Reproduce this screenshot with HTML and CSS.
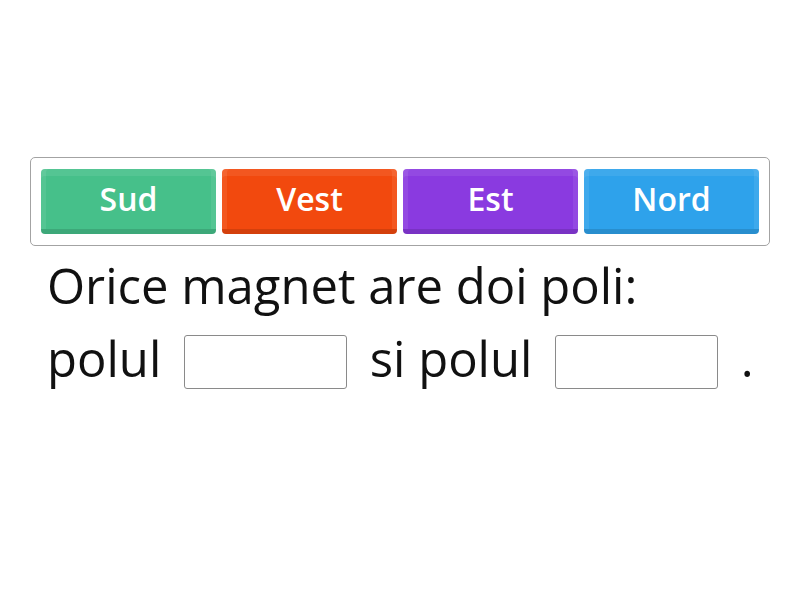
FILE: index.html
```html
<!DOCTYPE html>
<html>
<head>
<meta charset="utf-8">
<link rel="stylesheet" href="styles.css">
</head>
<body>
<div class="page">
  <div class="bank">
    <div class="tile green">Sud</div>
    <div class="tile red">Vest</div>
    <div class="tile purple">Est</div>
    <div class="tile blue">Nord</div>
  </div>
  <div class="sentence">
    <div class="line">Orice magnet are doi poli:</div>
    <div class="line">polul <span class="blank"></span> si polul <span class="blank"></span> .</div>
  </div>
</div>
</body>
</html>
```

FILE: styles.css
```css
html, body {
  margin: 0;
  padding: 0;
  background: #fff;
}
.page {
  width: 800px;
  height: 600px;
  padding-top: 157px;
  box-sizing: border-box;
  font-family: "Open Sans", sans-serif;
}
.bank {
  margin-left: 30px;
  width: 740px;
  box-sizing: border-box;
  border: 1px solid #a3a3a3;
  border-radius: 5px;
  padding: 11px 10px;
  display: flex;
  gap: 6px;
}
.tile {
  flex: 1;
  height: 65px;
  box-sizing: border-box;
  border-radius: 4px;
  color: #fff;
  font-weight: 600;
  font-size: 32px;
  line-height: 40px;
  display: flex;
  align-items: center;
  justify-content: center;
  border-bottom: 5px solid rgba(0,0,0,0.12);
  box-shadow: inset 0 7px 0 rgba(255,255,255,0.08), inset 5px 0 0 rgba(255,255,255,0.08), inset -5px 0 0 rgba(255,255,255,0.08);
  padding-bottom: 1px;
}
.green { background: #46c08a; }
.red { background: #f2490e; }
.purple { background: #8a3ae0; }
.blue { background: #2ea2eb; }
.sentence {
  margin-left: 47px;
  margin-top: 3px;
  font-size: 49px;
  line-height: 73px;
  color: #111;
}
.blank {
  display: inline-block;
  width: 163px;
  height: 54px;
  box-sizing: border-box;
  border: 1px solid #8a8a8a;
  border-radius: 3px;
  vertical-align: -12px;
  margin: 0 10px;
}
```
